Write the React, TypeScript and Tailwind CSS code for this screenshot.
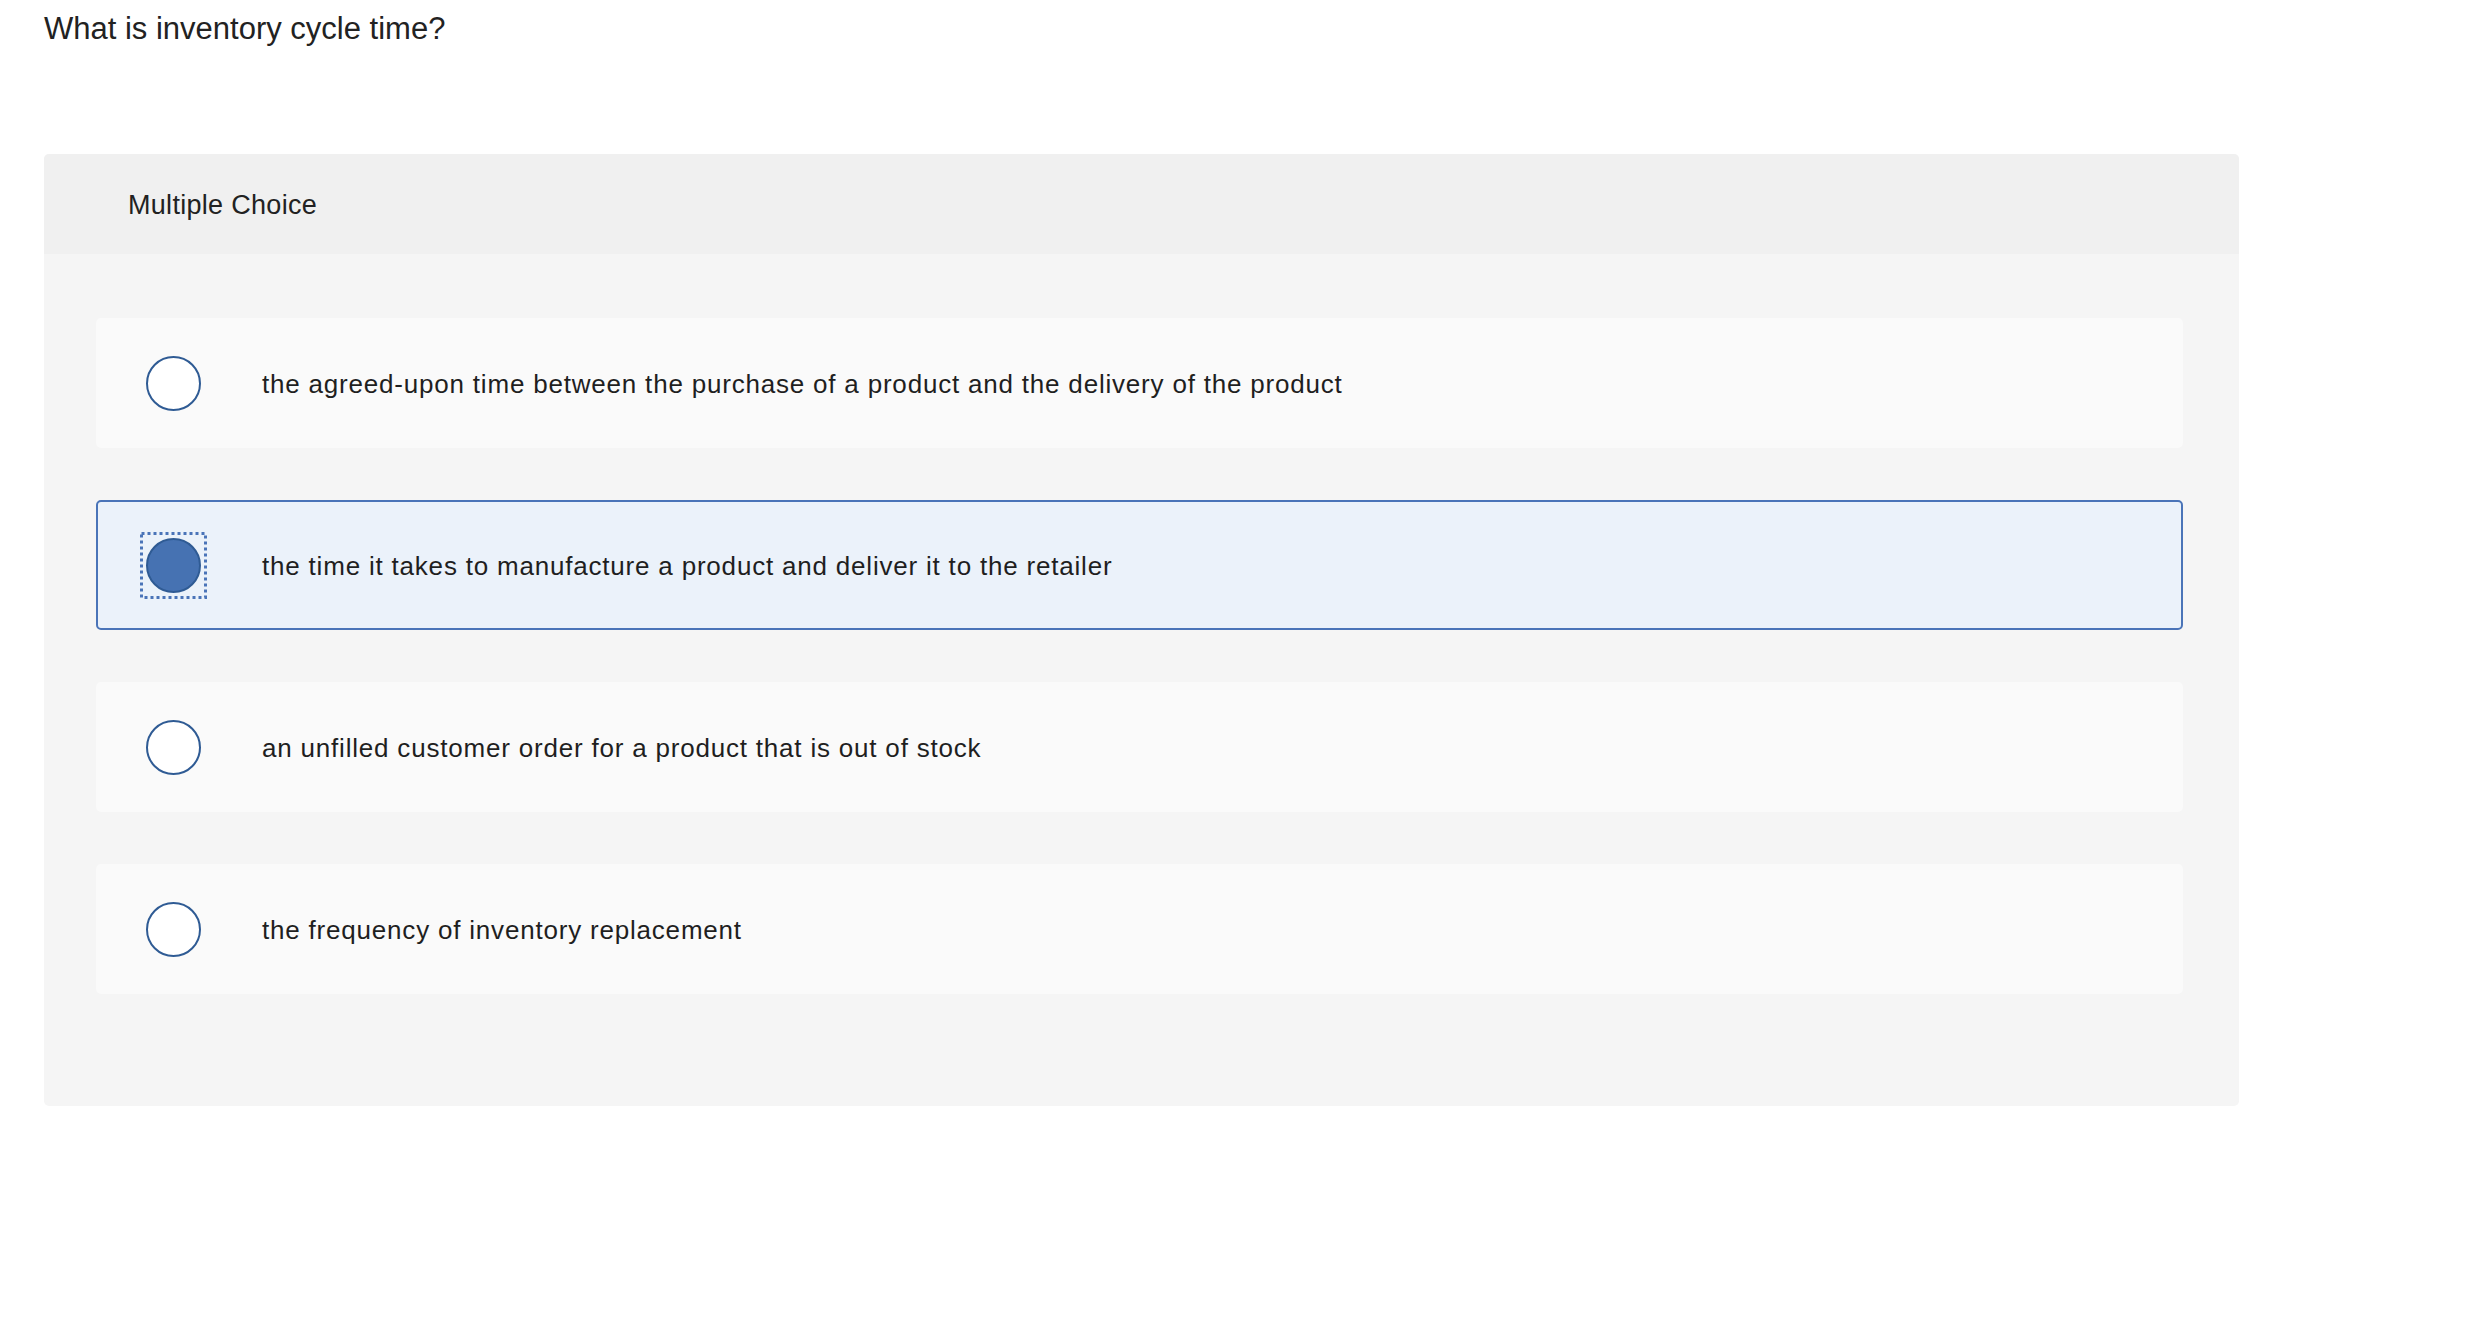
const choices = [
  'the agreed-upon time between the purchase of a product and the delivery of the product',
  'the time it takes to manufacture a product and deliver it to the retailer',
  'an unfilled customer order for a product that is out of stock',
  'the frequency of inventory replacement',
]

function Radio({ checked }: { checked: boolean }) {
  if (!checked) {
    return <div className="h-[55px] w-[55px] shrink-0 rounded-full border-2 border-[#2f5b94] bg-white" />
  }
  return (
    <div className="relative h-[55px] w-[55px] shrink-0">
      <div className="h-full w-full rounded-full border-2 border-[#2f5b94] bg-[#4672b2]" />
      {/* keyboard focus ring */}
      <svg className="absolute left-[-6px] top-[-6px] h-[67px] w-[67px]" viewBox="0 0 67 67">
        <rect x="1.5" y="1.5" width="64" height="64" fill="none" stroke="#4a74b8" strokeWidth="3" strokeDasharray="3 3" />
      </svg>
    </div>
  )
}

export default function App() {
  const selected = 1
  return (
    <div className="min-h-screen bg-white pl-[44px] pt-[10px] font-['Liberation_Sans',Arial,sans-serif] text-[#222]">
      <h1 className="text-[31px] leading-[37px] font-normal">What is inventory cycle time?</h1>

      <div className="mt-[107px] w-[2195px] overflow-hidden rounded-[5px] bg-[#f5f5f5]">
        <div className="flex h-[100px] items-center bg-[#f0f0f0] pl-[84px] pt-[3px] text-[27px] tracking-[0.3px]">
          Multiple Choice
        </div>

        <div className="flex flex-col gap-[52px] pb-[112px] pl-[52px] pr-[56px] pt-[64px]">
          {choices.map((text, i) => (
            <div
              key={i}
              className={
                i === selected
                  ? 'flex h-[130px] items-center rounded-[5px] border-2 border-[#4a74b8] bg-[#ebf2fa] pl-[48px]'
                  : 'flex h-[130px] items-center rounded-[5px] border-2 border-transparent bg-[#fafafa] pl-[48px]'
              }
            >
              <Radio checked={i === selected} />
              <span className="ml-[61px] pt-[3px] text-[26px] tracking-[0.8px] text-[#1f1f1f]">{text}</span>
            </div>
          ))}
        </div>
      </div>
    </div>
  )
}
